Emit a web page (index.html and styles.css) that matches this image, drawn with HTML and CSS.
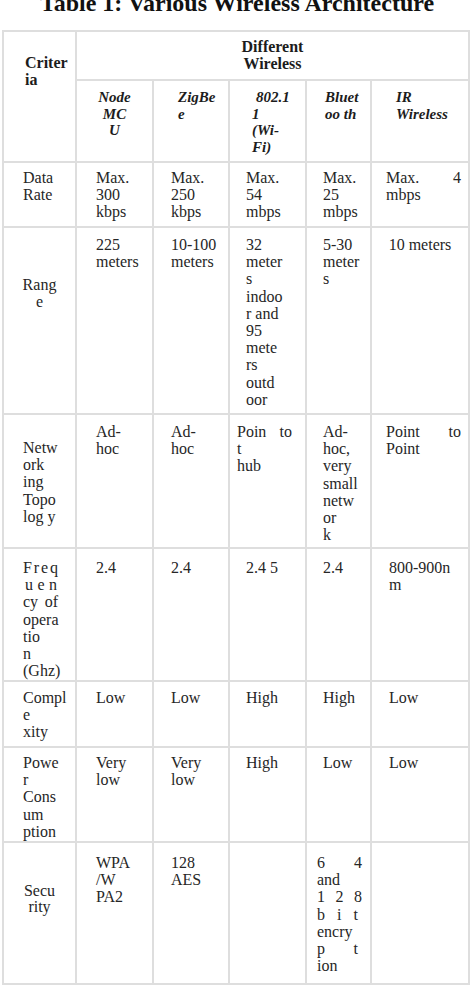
FILE: index.html
```html
<!DOCTYPE html>
<html lang="en">
<head>
<meta charset="utf-8">
<title>Table 1: Various Wireless Architecture</title>
<link rel="stylesheet" href="styles.css">
</head>
<body>
<h1 class="caption">Table 1: Various Wireless Architecture</h1>
<table class="grid">
  <colgroup>
    <col class="c0"><col class="c1"><col class="c2"><col class="c3"><col class="c4"><col class="c5">
  </colgroup>
  <thead>
    <tr class="h-top">
      <th rowspan="2" class="crit">Criter<br>ia</th>
      <th colspan="5" class="diff">Different<br>Wireless</th>
    </tr>
    <tr class="h-sub">
      <th class="tech t1">Node<br>MC<br>U</th>
      <th class="tech t2">ZigBe<br>e</th>
      <th class="tech t3"><span class="ind">802.1</span><br>1<br>(Wi-<br>Fi)</th>
      <th class="tech t4">Bluet<br>oo th</th>
      <th class="tech t5">IR<br>Wireless</th>
    </tr>
  </thead>
  <tbody>
    <tr class="r-data">
      <td>Data<br>Rate</td>
      <td>Max.<br>300<br>kbps</td>
      <td>Max.<br>250<br>kbps</td>
      <td>Max.<br>54<br>mbps</td>
      <td>Max.<br>25<br>mbps</td>
      <td class="wide"><span class="jl">Max. 4</span>mbps</td>
    </tr>
    <tr class="r-range">
      <td class="mid">Rang<br>e</td>
      <td>225<br>meters</td>
      <td>10-100<br>meters</td>
      <td>32<br>meter<br>s<br>indoo<br>r and<br>95<br>mete<br>rs<br>outd<br>oor</td>
      <td>5-30<br>meter<br>s</td>
      <td class="mid">10 meters</td>
    </tr>
    <tr class="r-net">
      <td class="lowered">Netw<br>ork<br>ing<br>Topo<br>log y</td>
      <td>Ad-<br>hoc</td>
      <td>Ad-<br>hoc</td>
      <td class="tight"><span class="jl">Poin to</span>t<br>hub</td>
      <td>Ad-<br>hoc,<br>very<br>small<br>netw<br>or<br>k</td>
      <td class="wide"><span class="jl">Point to</span>Point</td>
    </tr>
    <tr class="r-freq">
      <td><span class="sp-a">Freq</span><br><span class="sp-b">uen</span><br><span class="jl">cy of</span>opera<br>tio<br>n<br>(Ghz)</td>
      <td>2.4</td>
      <td>2.4</td>
      <td>2.4 5</td>
      <td>2.4</td>
      <td>800-900n<br>m</td>
    </tr>
    <tr class="r-comp">
      <td>Compl<br>e<br>xity</td>
      <td>Low</td>
      <td>Low</td>
      <td>High</td>
      <td>High</td>
      <td>Low</td>
    </tr>
    <tr class="r-power">
      <td>Powe<br>r<br>Cons<br>um<br>ption</td>
      <td>Very<br>low</td>
      <td>Very<br>low</td>
      <td>High</td>
      <td>Low</td>
      <td>Low</td>
    </tr>
    <tr class="r-sec">
      <td class="mid lowered">Secu<br>rity</td>
      <td>WPA<br>/W<br>PA2</td>
      <td>128<br>AES</td>
      <td></td>
      <td class="narrow"><span class="jl">6 4</span>and<br><span class="jl">1 2 8</span><span class="jl short">b i t</span>encry<br><span class="jl short">p t</span>ion</td>
      <td></td>
    </tr>
  </tbody>
</table>
</body>
</html>
```

FILE: styles.css
```css
html, body {
  margin: 0;
  padding: 0;
  background: #ffffff;
}

body {
  font-family: "Liberation Serif", "Times New Roman", serif;
  color: #262626;
  overflow: hidden;
}

.caption {
  margin: 0;
  font-size: 24px;
  line-height: 7px;
  font-weight: 700;
  text-align: center;
  color: #111111;
}

.grid {
  margin: 23px 0 0 2px;
  width: 468px;
  table-layout: fixed;
  border-collapse: separate;
  border-spacing: 2px;
  background: #dedede;
  font-size: 16px;
  line-height: 17.2px;
}

.c0 { width: 71px; }
.c1 { width: 75px; }
.c2 { width: 74px; }
.c3 { width: 75px; }
.c4 { width: 63px; }
.c5 { width: 96px; }

.grid th,
.grid td {
  background: #ffffff;
  padding: 0;
  vertical-align: top;
  text-align: left;
  white-space: nowrap;
  font-weight: 400;
}

/* header */
.grid th {
  font-weight: 700;
  color: #1c1c1c;
}

.h-top { height: 47px; }
.h-sub { height: 80px; }

.crit {
  padding: 22px 0 0 21px !important;
  line-height: 17px;
}

.diff {
  text-align: center !important;
  padding-top: 7px !important;
  line-height: 16.5px;
}

.tech {
  font-style: italic;
  font-size: 15px;
  line-height: 16.5px;
  padding-top: 8px !important;
}

.t1 { text-align: center !important; }
.t2 { padding-left: 24px !important; }
.t3 { padding-left: 22px !important; }
.t4 { padding-left: 18px !important; }
.t5 { padding-left: 24px !important; }

.ind {
  padding-left: 4px;
}

/* body rows */
.r-data  { height: 63px; }
.r-range { height: 185px; }
.r-net   { height: 132px; }
.r-freq  { height: 131px; }
.r-comp  { height: 64px; }
.r-power { height: 93px; }
.r-sec   { height: 140px; }

.r-data td  { padding-top: 6px; }
.r-range td { padding-top: 8px; }
.r-net td   { padding-top: 8px; }
.r-freq td  { padding-top: 10px; }
.r-comp td  { padding-top: 7px; }
.r-power td { padding-top: 6px; }
.r-sec td   { padding-top: 11px; }

.grid td:nth-child(1) { padding-left: 19px; padding-right: 17px; }
.grid td:nth-child(2) { padding-left: 19px; }
.grid td:nth-child(3) { padding-left: 17px; }
.grid td:nth-child(4) { padding-left: 16px; }
.grid td:nth-child(5) { padding-left: 16px; }
.grid td:nth-child(6) { padding-left: 17px; padding-right: 7px; }

.grid td.wide { padding-left: 14px; }

.grid td.mid {
  text-align: center;
  padding-left: 0;
  padding-right: 0;
}

.r-range td.mid:first-child { padding-top: 48px; }
.r-net td.lowered { padding-top: 24px; }
.r-sec td.lowered { padding-top: 40px; line-height: 16px; }

.grid td.tight { padding-left: 7px; padding-right: 13px; }
.grid td.narrow { padding-left: 10px; padding-right: 8px; }

.jl {
  display: block;
  white-space: normal;
  text-align: justify;
  text-align-last: justify;
}

.jl.short { width: 41px; }

.sp-a { letter-spacing: 1.9px; }
.sp-b { letter-spacing: 4.5px; padding-left: 2px; }
```
